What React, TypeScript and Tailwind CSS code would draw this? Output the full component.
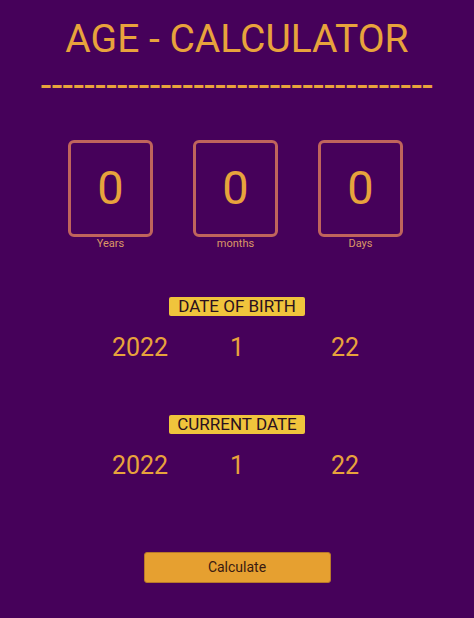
import React from 'react';

const stats = [
  { value: 0, label: 'Years' },
  { value: 0, label: 'months' },
  { value: 0, label: 'Days' },
];

function DateRow({ title, y, m, d }: { title: string; y: number; m: number; d: number }) {
  return (
    <div className="flex flex-col items-center">
      <div className="w-[136px] h-[19px] rounded-[2px] bg-[#f0c43c] text-[#2a1020] text-[17px] leading-[19px] text-center">
        {title}
      </div>
      <div className="relative w-full h-[40px] mt-[12px] text-[25px] leading-[40px] text-[#e8a33c]">
        <span className="absolute left-[140px] -translate-x-1/2">{y}</span>
        <span className="absolute left-[237px] -translate-x-1/2">{m}</span>
        <span className="absolute left-[345px] -translate-x-1/2">{d}</span>
      </div>
    </div>
  );
}

export default function App() {
  return (
    <div className="w-[474px] h-[618px] bg-[#46015a] font-['Roboto',sans-serif] flex flex-col items-center">
      {/* Header */}
      <h1 className="mt-[16px] text-[39px] leading-[46px] text-[#e8a33c]">AGE - CALCULATOR</h1>
      <div className="mt-[0px] text-[38px] leading-[46px] text-[#e8a33c] tracking-[0.4px]">
        {'-'.repeat(36)}
      </div>

      {/* Result boxes */}
      <div className="mt-[32px] mr-[3px] flex gap-[40px]">
        {stats.map((s) => (
          <div key={s.label} className="flex flex-col items-center">
            <div className="w-[85px] h-[97px] border-[3px] border-[#c0645c] rounded-[6px] flex items-center justify-center text-[47px] text-[#e8a33c]">
              {s.value}
            </div>
            <div className="text-[11px] leading-[14px] text-[#db9866]">{s.label}</div>
          </div>
        ))}
      </div>

      {/* Inputs */}
      <div className="w-full mt-[46px] flex flex-col gap-[47px]">
        <DateRow title="DATE OF BIRTH" y={2022} m={1} d={22} />
        <DateRow title="CURRENT DATE" y={2022} m={1} d={22} />
      </div>

      <button className="mt-[66px] w-[187px] h-[31px] rounded-[3px] bg-[#e6a030] border border-[#b8782a] text-[14px] text-[#3a1a10]">
        Calculate
      </button>
    </div>
  );
}
